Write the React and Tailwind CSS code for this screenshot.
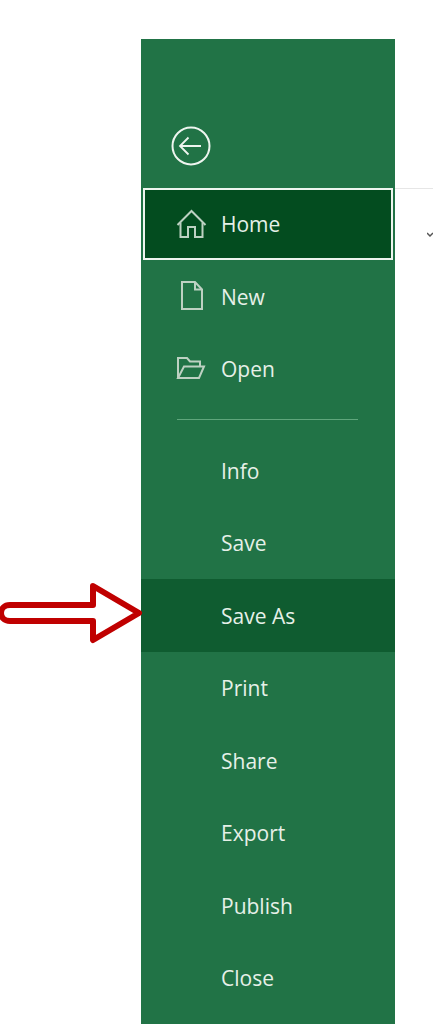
const TEXT_ROWS = ['Info', 'Save', 'Save As', 'Print', 'Share', 'Export', 'Publish', 'Close'];

const BackIcon = () => (
  <svg className="w-10 h-10" viewBox="0 0 40 40" fill="none" stroke="#eef5ef" strokeWidth="2">
    <circle cx="20" cy="20" r="18.5" />
    <path d="M9 20h21M17.5 11.5L9 20l8.5 8.5" strokeWidth="1.8" />
  </svg>
);

const HomeIcon = () => (
  <svg className="w-8 h-8" viewBox="0 0 32 32" fill="none" stroke="#bdd1c2" strokeWidth="2">
    <path d="M1.5 17L15.5 3l14 14" />
    <path d="M4.5 14.5V29H12V19h7v10h7.500V14.500" />
  </svg>
);

const NewIcon = () => (
  <svg className="w-8 h-8" viewBox="0 0 32 32" fill="none" stroke="#bdd1c2" strokeWidth="2">
    <path d="M6 2h13l7 7.500V29H6z" />
    <path d="M19 2v7.500h7" />
  </svg>
);

const OpenIcon = () => (
  <svg className="w-8 h-8" viewBox="0 0 32 32" fill="none" stroke="#bdd1c2" strokeWidth="2">
    <path d="M2 25V5h9l3 3.500h10v5" />
    <path d="M2 25h21l5-11.500H8z" />
  </svg>
);

const RedArrow = () => (
  <svg className="absolute left-0 top-[580px] w-[144px] h-[66px]" viewBox="0 0 144 66" fill="none">
    <path
      d="M93 6L139 33L93 60V41H10C4 41 1 37 1 33C1 29 4 25 10 25H93z"
      stroke="#c00000"
      strokeWidth="6"
      strokeLinejoin="round"
    />
  </svg>
);

const Row = ({ label, icon, active, selected }) => (
  <div
    className={`h-[72.5px] flex items-center text-[21px] text-[#e6f0e8] ${
      active ? 'bg-[#0f5c30]' : ''
    } ${selected ? 'mx-[2px] border-2 border-[#eef5ef] bg-[#034c1f]' : ''}`}
  >
    <div className={`shrink-0 ${selected ? 'w-[76px] pl-[31px]' : 'w-[80px] pl-[35px]'}`}>{icon}</div>
    <span className="pt-[2px]">{label}</span>
  </div>
);

export default function App() {
  return (
    <div className="relative w-[433px] h-[1024px] overflow-hidden bg-white font-['Open_Sans',sans-serif]">
      <div className="flex pt-[39px] pl-[141px]">
        <nav className="w-[254px] h-[985px] shrink-0 bg-[#217346]">
          <div className="h-[148.5px] pl-[30px] pt-[87px]">
            <BackIcon />
          </div>
          <Row label="Home" icon={<HomeIcon />} selected />
          <Row label="New" icon={<NewIcon />} />
          <Row label="Open" icon={<OpenIcon />} />
          <div className="h-[29px] flex items-center pl-[36px] pr-[37px]">
            <div className="h-px w-full bg-[#5fa67c]" />
          </div>
          {TEXT_ROWS.map((label) => (
            <Row key={label} label={label} active={label === 'Save As'} />
          ))}
        </nav>
        <div className="flex-1 pt-[149px]">
          <div className="h-px bg-[#e6e6e6]" />
          <svg className="mt-[43px] ml-[32px] w-[6px] h-[6px]" viewBox="0 0 6 6" fill="none" stroke="#555" strokeWidth="1.5">
            <path d="M0 1l3 3 3-3" />
          </svg>
        </div>
      </div>
      <RedArrow />
    </div>
  );
}
